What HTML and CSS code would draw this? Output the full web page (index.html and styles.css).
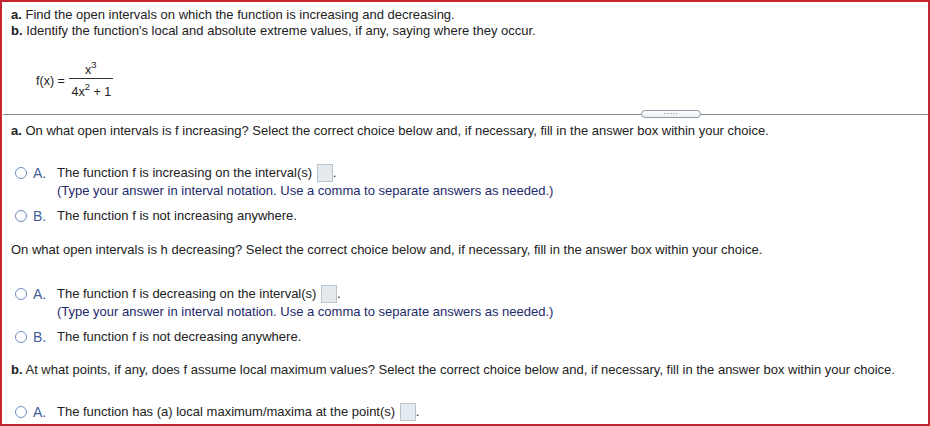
FILE: index.html
```html
<!DOCTYPE html>
<html>
<head>
<meta charset="utf-8">
<link rel="stylesheet" href="styles.css">
</head>
<body>
<div class="frame">
  <div class="intro">
    <p class="line"><b>a.</b> Find the open intervals on which the function is increasing and decreasing.</p>
    <p class="line"><b>b.</b> Identify the function's local and absolute extreme values, if any, saying where they occur.</p>
    <div class="formula">
      <span class="fx">f(x) =</span>
      <span class="frac">
        <span class="num">x<sup>3</sup></span>
        <span class="bar"></span>
        <span class="den">4x<sup>2</sup> + 1</span>
      </span>
    </div>
  </div>
  <div class="divider">
    <span class="rule"></span>
    <span class="more">.....</span>
    <span class="rule short"></span>
  </div>
  <div class="part">
    <p class="question"><b>a.</b> On what open intervals is f increasing? Select the correct choice below and, if necessary, fill in the answer box within your choice.</p>
    <div class="choices">
      <div class="choice">
        <span class="radio"></span><span class="letter">A.</span>
        <div class="body">
          <div>The function f is increasing on the interval(s) <span class="box"></span>.</div>
          <div class="note">(Type your answer in interval notation. Use a comma to separate answers as needed.)</div>
        </div>
      </div>
      <div class="choice">
        <span class="radio"></span><span class="letter">B.</span>
        <div class="body"><div>The function f is not increasing anywhere.</div></div>
      </div>
    </div>
    <p class="question q2">On what open intervals is h decreasing? Select the correct choice below and, if necessary, fill in the answer box within your choice.</p>
    <div class="choices">
      <div class="choice">
        <span class="radio"></span><span class="letter">A.</span>
        <div class="body">
          <div>The function f is decreasing on the interval(s) <span class="box"></span>.</div>
          <div class="note">(Type your answer in interval notation. Use a comma to separate answers as needed.)</div>
        </div>
      </div>
      <div class="choice">
        <span class="radio"></span><span class="letter">B.</span>
        <div class="body"><div>The function f is not decreasing anywhere.</div></div>
      </div>
    </div>
    <p class="question q3"><b>b.</b> At what points, if any, does f assume local maximum values? Select the correct choice below and, if necessary, fill in the answer box within your choice.</p>
    <div class="choices">
      <div class="choice">
        <span class="radio"></span><span class="letter">A.</span>
        <div class="body">
          <div>The function has (a) local maximum/maxima at the point(s) <span class="box"></span>.</div>
        </div>
      </div>
    </div>
  </div>
</div>
</body>
</html>
```
FILE: styles.css
```css
* { box-sizing: border-box; }
html, body { margin: 0; padding: 0; background: #fff; }
body {
  font-family: "Liberation Sans", Arial, sans-serif;
  color: #222;
  font-size: 13px;
}
p { margin: 0; }
b { font-weight: bold; }

.frame {
  width: 930px;
  height: 426px;
  border: 2px solid #c3262c;
  overflow: hidden;
  background: #fff;
}

.intro {
  padding: 5px 0 0 9px;
}
.line {
  line-height: 16px;
}

.formula {
  display: flex;
  align-items: flex-start;
  margin-top: 18px;
  padding-left: 25px;
  height: 47px;
}
.fx {
  font-size: 12.5px;
  line-height: 14px;
  margin-top: 17px;
  margin-right: 4px;
}
.frac {
  display: flex;
  flex-direction: column;
  align-items: center;
  font-size: 12.5px;
}
.num {
  line-height: 14px;
  padding-top: 6px;
}
.den {
  line-height: 14px;
  padding: 6px 1px 0 2px;
}
sup {
  font-size: 9.5px;
  line-height: 0;
  vertical-align: 6px;
}
.bar {
  display: block;
  width: 44px;
  height: 1px;
  margin-top: 1px;
  background: #333;
}

.divider {
  display: flex;
  align-items: center;
  height: 8px;
  margin-top: 6px;
  padding-left: 1px;
}
.rule {
  flex: 1;
  height: 1px;
  background: #8c8c8c;
}
.rule.short {
  flex: 0 0 227px;
}
.more {
  width: 60px;
  height: 8px;
  border: 1px solid #8e9aa6;
  border-radius: 4px;
  background: linear-gradient(#fdfdfe, #eaeff4);
  font-size: 9px;
  line-height: 1px;
  letter-spacing: 0.5px;
  text-align: center;
  color: #5d6a78;
}

.part {
  padding: 4px 0 0 9px;
}
.question {
  line-height: 18px;
  margin-bottom: 24px;
}
.q2 { margin-bottom: 26px; }
.choices {
  display: flex;
  flex-direction: column;
  gap: 7px;
  margin-bottom: 16px;
}
.choices + .q3 { margin-top: -1px; }
.choice {
  display: flex;
  align-items: flex-start;
  line-height: 18px;
}
.radio {
  width: 12px;
  height: 12px;
  border: 1px solid #6f8fbf;
  border-radius: 50%;
  margin: 3px 0 0 4px;
  flex: 0 0 12px;
  background: #fff;
}
.letter {
  color: #3f5f9c;
  font-size: 14px;
  width: 30px;
  padding-left: 6px;
}
.note {
  color: #1d2a6b;
}
.box {
  display: inline-block;
  width: 16px;
  height: 18px;
  vertical-align: -5px;
  border: 1px solid #b9c4cd;
  background: #e5eaee;
  margin-left: 1px;
}
```
